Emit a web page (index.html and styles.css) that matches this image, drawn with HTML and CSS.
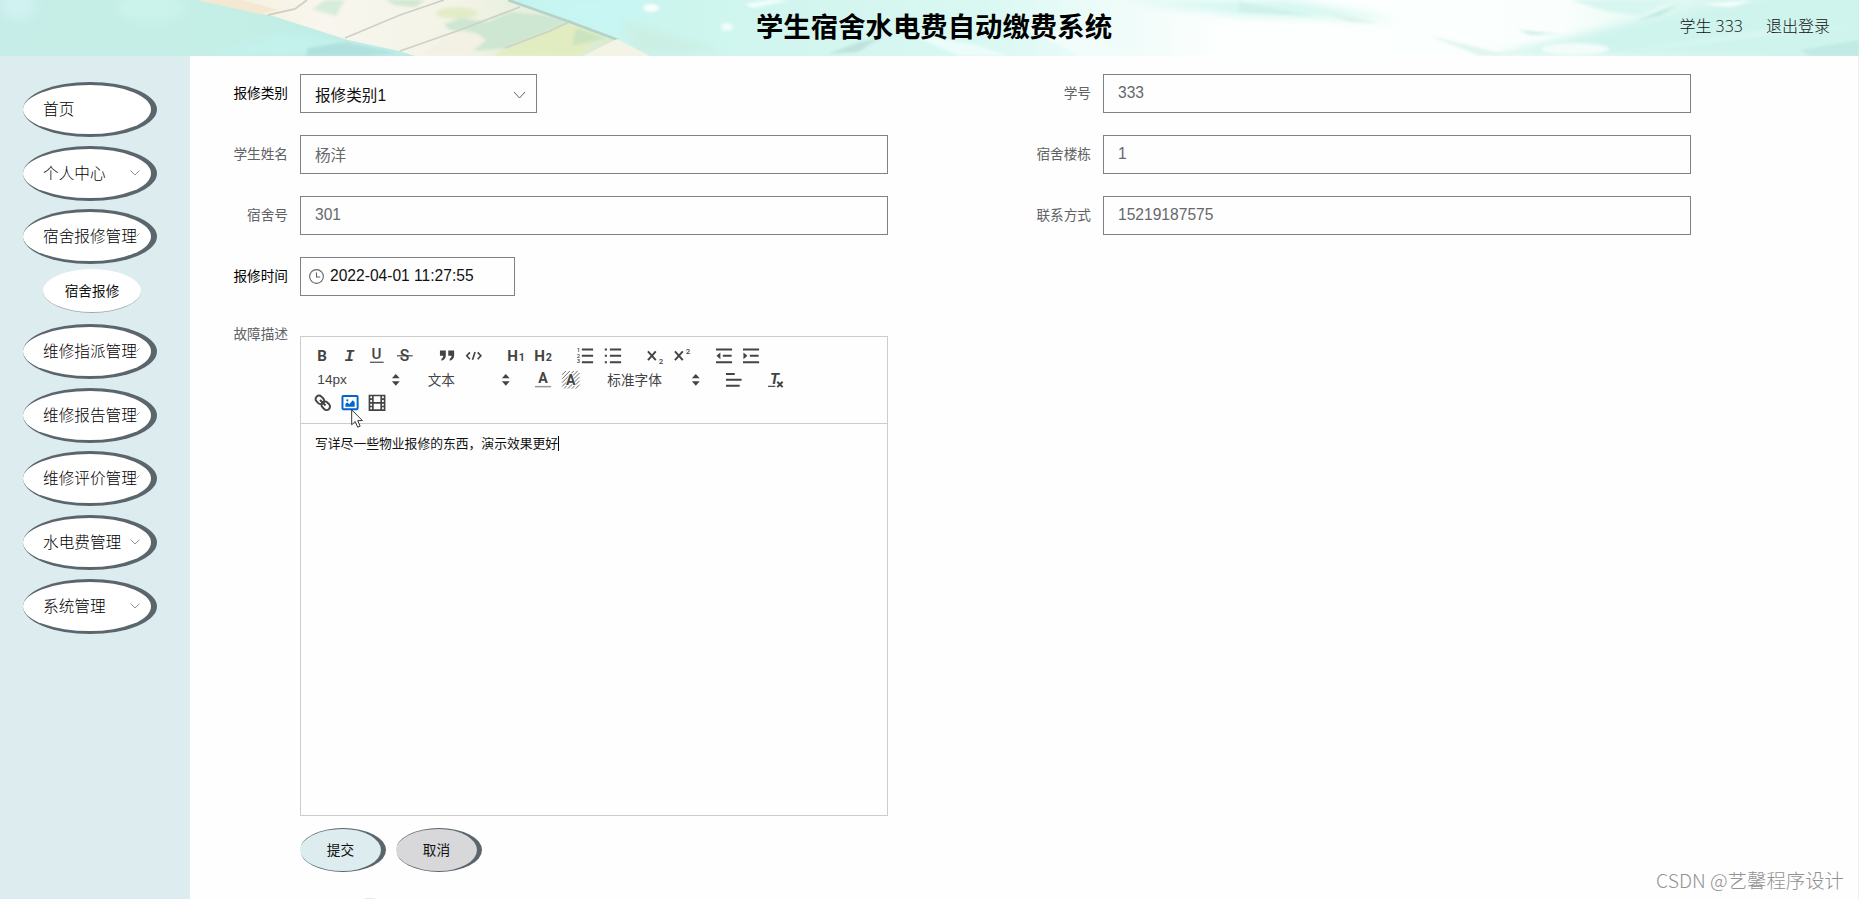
FILE: index.html
```html
<!DOCTYPE html>
<html lang="zh-CN">
<head>
    <meta charset="UTF-8">
    <meta name="viewport" content="width=device-width, initial-scale=1.0">
    <title>学生宿舍水电费自动缴费系统</title>
    <link rel="stylesheet" href="styles.css">
</head>
<body>
    <header class="header">
        <svg class="header-bg" viewBox="0 0 1859 56" preserveAspectRatio="none">
            <defs>
                <linearGradient id="sky">
                    <stop offset="0" stop-color="#c6ede7"/>
                    <stop offset=".12" stop-color="#c4efe6"/>
                    <stop offset=".22" stop-color="#bcebe5"/>
                    <stop offset=".33" stop-color="#c9f5ee"/>
                    <stop offset=".44" stop-color="#d3f6ef"/>
                    <stop offset=".53" stop-color="#daf8f3"/>
                    <stop offset=".6" stop-color="#effcf9"/>
                    <stop offset=".66" stop-color="#fdfffe"/>
                    <stop offset=".84" stop-color="#fafffd"/>
                    <stop offset=".92" stop-color="#d9f6ef"/>
                    <stop offset="1" stop-color="#c9f3ec"/>
                </linearGradient>
                <linearGradient id="roof">
                    <stop offset="0" stop-color="#f5eddb"/>
                    <stop offset=".3" stop-color="#f8f6ee"/>
                    <stop offset=".62" stop-color="#f3f3e7"/>
                    <stop offset="1" stop-color="#d8ebcf"/>
                </linearGradient>
                <filter id="soft"><feGaussianBlur stdDeviation="1.8"/></filter>
                <filter id="wash"><feGaussianBlur stdDeviation="5"/></filter>
            </defs>
            <rect width="1859" height="56" fill="url(#sky)"/>
            <g filter="url(#wash)">
                <ellipse cx="18" cy="6" rx="18" ry="14" fill="#d0f2f1"/>
                <ellipse cx="150" cy="8" rx="34" ry="14" fill="#ccf2ec"/>
                <path d="M210 56 280 34 360 44 410 56z" fill="#c3f2ec"/>
                <path d="M510 0H640V44L600 30z" fill="#c8f6f3"/>
                <path d="M620 20 720 50 640 56z" fill="#ccefe4"/>
                <path d="M1120 0H1290L1400 20 1240 16z" fill="#d5f7f1"/>
                <path d="M1490 56 1640 20 1740 0H1859V56z" fill="#cff4ed"/>
            </g>
            <path d="M198 0 273 16 348 40 399 51 415 56H583L617 39 575 24 510 0z" fill="url(#roof)"/>
            <path d="M198 0 259 14 279 10 242 0z" fill="#f5e8d2"/>
            <g filter="url(#soft)">
                <path d="M312 9 325 0H345L336 16z" fill="#d8ecdc"/>
                <path d="M385 0H425L415 7 395 5z" fill="#cfe8d0"/>
                <ellipse cx="457" cy="13" rx="21" ry="6" fill="#e3ecc8"/>
                <path d="M444 24 462 18 488 22 510 12 552 16 568 22 510 48 462 52 478 34 450 30z" fill="#cde7d2"/>
                <path d="M420 54 462 30 478 34 486 40 470 54z" fill="#f3f0e4"/>
                <path d="M510 47 568 22 600 34 580 56H492z" fill="#e1edc1"/>
                <path d="M576 28 606 38 572 46z" fill="#cbe4bf"/>
                <path d="M308 48 345 42 398 53 370 56H306z" fill="#b1e1de"/>
            </g>
            <g fill="none" stroke="#cdd2c5" stroke-width="1.8">
                <path d="M268 15 295 9 307 0"/>
                <path d="M345 38 400 15 444 0"/>
                <path d="M400 51 460 30 520 7"/>
                <path d="M505 48 550 31 571 21"/>
            </g>
            <path d="M508 0 570 22 618 40" fill="none" stroke="#b4d2cb" stroke-width="2.6"/>
            <path d="M583 56 617 39 650 56z" fill="#f3f4e6"/>
            <g filter="url(#soft)">
                <ellipse cx="651" cy="8" rx="8" ry="4" fill="#f8fffe"/>
                <ellipse cx="727" cy="27" rx="6" ry="4" fill="#f1fdfb"/>
                <path d="M745 4 770 0H790L752 8z" fill="#f4fffd"/>
                <path d="M828 54 860 42 880 38 858 52z" fill="#bfe2dd"/>
                <path d="M900 30 980 46 1010 56H960z" fill="#ecfcf9"/>
                <path d="M1010 20 1100 40 1140 56H1080z" fill="#f2fdfb"/>
                <path d="M1239 2 1315 16 1239 12z" fill="#cff1e9"/>
                <path d="M1320 11 1380 23 1350 22z" fill="#def3eb"/>
                <path d="M1430 36 1500 53 1560 48 1500 56H1480z" fill="#e1f5ed"/>
                <path d="M1518 30 1560 34 1530 35z" fill="#cdeee6"/>
                <path d="M1570 0H1670L1640 16 1610 12z" fill="#d8f6f0"/>
                <path d="M1636 21 1680 4 1660 15z" fill="#b6e5db"/>
                <path d="M1700 4 1755 0 1730 7z" fill="#f7fffe"/>
                <ellipse cx="1575" cy="49" rx="34" ry="6" fill="#f3fcf9"/>
                <path d="M1620 52 1760 30 1859 26 1700 44z" fill="#d7f7f1"/>
                <path d="M1800 50 1859 40V56H1810z" fill="#c0eae3"/>
            </g>
        </svg>
        <h1 class="header-title">学生宿舍水电费自动缴费系统</h1>
        <div class="header-user">
            <span>学生 333</span>
            <a class="logout">退出登录</a>
        </div>
    </header>

    <div class="wrapper">
        <nav class="sidebar">
            <ul class="menu">
                <li class="menu-item">首页</li>
                <li class="menu-item">个人中心<svg class="arrow" viewBox="0 0 10 6"><path d="M.5.5 5 5 9.5.5"/></svg></li>
                <li class="menu-item">宿舍报修管理<svg class="arrow" viewBox="0 0 10 6"><path d="M6.6 3.4 9.5.5"/></svg></li>
                <li class="submenu-item">宿舍报修</li>
                <li class="menu-item">维修指派管理<svg class="arrow" viewBox="0 0 10 6"><path d="M6.6 3.4 9.5.5"/></svg></li>
                <li class="menu-item">维修报告管理<svg class="arrow" viewBox="0 0 10 6"><path d="M6.6 3.4 9.5.5"/></svg></li>
                <li class="menu-item">维修评价管理<svg class="arrow" viewBox="0 0 10 6"><path d="M6.6 3.4 9.5.5"/></svg></li>
                <li class="menu-item">水电费管理<svg class="arrow" viewBox="0 0 10 6"><path d="M.5.5 5 5 9.5.5"/></svg></li>
                <li class="menu-item">系统管理<svg class="arrow" viewBox="0 0 10 6"><path d="M.5.5 5 5 9.5.5"/></svg></li>
            </ul>
        </nav>

        <main class="content">
            <div class="form-grid">
                <div class="form-item active">
                    <label>报修类别</label>
                    <div class="field select">报修类别1<svg class="select-arrow" viewBox="0 0 12 8"><path d="M.5 1 6 7 11.5 1"/></svg></div>
                </div>
                <div class="form-item">
                    <label>学号</label>
                    <div class="field">333</div>
                </div>
                <div class="form-item">
                    <label>学生姓名</label>
                    <div class="field">杨洋</div>
                </div>
                <div class="form-item">
                    <label>宿舍楼栋</label>
                    <div class="field">1</div>
                </div>
                <div class="form-item">
                    <label>宿舍号</label>
                    <div class="field">301</div>
                </div>
                <div class="form-item">
                    <label>联系方式</label>
                    <div class="field">15219187575</div>
                </div>
                <div class="form-item active">
                    <label>报修时间</label>
                    <div class="field date"><svg class="clock" viewBox="0 0 14 14"><circle cx="7" cy="7" r="6.4"/><path d="M7 3.2V7.4H10.4"/></svg>2022-04-01 11:27:55</div>
                </div>
            </div>

            <div class="form-item editor-item">
                <label>故障描述</label>
                <div class="editor">
                    <div class="toolbar">
                        <div class="toolbar-row">
                            <span class="formats">
                                <button><svg viewBox="0 0 18 18"><text class="glyph" x="3.4" y="14.6" font-size="15.5">B</text></svg></button>
                                <button><svg viewBox="0 0 18 18"><text class="glyph mono" x="3.6" y="14.4" font-size="17">I</text></svg></button>
                                <button><svg viewBox="0 0 18 18"><text class="glyph light" x="3.6" y="12.6" font-size="15.5">U</text><path class="thin" d="M2 15.6H16"/></svg></button>
                                <button><svg viewBox="0 0 18 18"><text class="glyph light" x="3.8" y="14.6" font-size="16">S</text><path class="thin" d="M1 9H17"/></svg></button>
                            </span>
                            <span class="formats">
                                <button><svg viewBox="0 0 18 18"><path class="fill" d="M2 3.500H8V8.500Q8 13 3.500 14V12Q5.300 11.500 5.400 9H2zM10.500 3.500H16.500V8.500Q16.500 13 12 14V12Q13.800 11.500 13.900 9H10.500z"/></svg></button>
                                <button><svg viewBox="0 0 18 18"><path class="even" d="M5 5.500 1.800 9 5 12.500M13 5.500 16.200 9 13 12.500M10.300 5 7.700 13"/></svg></button>
                            </span>
                            <span class="formats">
                                <button><svg viewBox="0 0 18 18"><text class="glyph" x=".2" y="14.4" font-size="15.5">H</text><text class="glyph" x="11.900" y="14.400" font-size="11">1</text></svg></button>
                                <button><svg viewBox="0 0 18 18"><text class="glyph" x=".2" y="14.4" font-size="15.5">H</text><text class="glyph" x="11.900" y="14.400" font-size="11">2</text></svg></button>
                            </span>
                            <span class="formats">
                                <button><svg viewBox="0 0 18 18"><path class="line" d="M6 2.500H17.500M6 9H17.500M6 15.500H17.500"/><text class="glyph light" x=".8" y="5.500" font-size="6">1</text><text class="glyph light" x=".8" y="11" font-size="6">2</text><text class="glyph light" x=".8" y="16.500" font-size="6">3</text></svg></button>
                                <button><svg viewBox="0 0 18 18"><path class="line" d="M6 2.500H17.500M6 9H17.500M6 15.500H17.500M.8 2.500H3M.8 9H3M.8 15.500H3"/></svg></button>
                            </span>
                            <span class="formats">
                                <button><svg viewBox="0 0 18 18"><path class="line" d="M2 4.500 10 13.500M10 4.500 2 13.500"/><text class="glyph light" x="13" y="17" font-size="8">2</text></svg></button>
                                <button><svg viewBox="0 0 18 18"><path class="line" d="M2 4.500 10 13.500M10 4.500 2 13.500"/><text class="glyph light" x="13" y="7" font-size="8">2</text></svg></button>
                            </span>
                            <span class="formats">
                                <button><svg viewBox="0 0 18 18"><path class="line" d="M1 2.500H17.500M8 9H17M1 15.500H17.500"/><path class="fill" d="M5.500 5.500V12.500L1.500 9z"/></svg></button>
                                <button><svg viewBox="0 0 18 18"><path class="line" d="M1 2.500H17.500M8 9H17M1 15.500H17.500"/><path class="fill" d="M1.500 5.500V12.500L5.500 9z"/></svg></button>
                            </span>
                        </div>
                        <div class="toolbar-row">
                            <span class="formats picker">14px<svg viewBox="0 0 18 18"><path class="fill" d="M5 7.500 9 3 13 7.500zM5 10.500 9 15 13 10.500z"/></svg></span>
                            <span class="formats picker">文本<svg viewBox="0 0 18 18"><path class="fill" d="M5 7.500 9 3 13 7.500zM5 10.500 9 15 13 10.500z"/></svg></span>
                            <span class="formats">
                                <button><svg viewBox="0 0 18 18"><text class="glyph" x="4.300" y="12" font-size="14.500">A</text><path class="pale" d="M1 16H17.500"/></svg></button>
                                <button><svg viewBox="0 0 18 18"><path class="hatch" d="M0 4 4 0M0 8 8 0M0 12 12 0M0 16 16 0M2 18 18 2M6 18 18 6M10 18 18 10M14 18 18 14"/><text class="glyph halo" x="4" y="14" font-size="14.500">A</text></svg></button>
                            </span>
                            <span class="formats picker font">标准字体<svg viewBox="0 0 18 18"><path class="fill" d="M5 7.500 9 3 13 7.500zM5 10.500 9 15 13 10.500z"/></svg></span>
                            <span class="formats">
                                <button><svg viewBox="0 0 18 18"><path class="line" d="M2 3H11M2 9H18M2 15H16"/></svg></button>
                            </span>
                            <span class="formats">
                                <button><svg viewBox="0 0 18 18"><text class="glyph slant" x="4" y="13" font-size="15.500">T</text><path class="thin" d="M2 15.700H9.500"/><path class="line" d="M11.500 11 17 16.500M17 11 11.500 16.500"/></svg></button>
                            </span>
                        </div>
                        <div class="toolbar-row">
                            <span class="formats">
                                <button><svg viewBox="0 0 18 18"><g class="chain" transform="rotate(45 9 9)"><rect x="0" y="5.500" width="9.500" height="7" rx="3.500"/><rect x="8.500" y="5.500" width="9.500" height="7" rx="3.500"/><path d="M5 9H13"/></g></svg></button>
                                <button class="hover"><svg viewBox="0 0 18 18"><rect class="line" x="1.500" y="2" width="15.500" height="13.500" rx=".8"/><circle class="fill" cx="6.500" cy="6.500" r="1.100"/><path class="fill" d="M4.500 13V10L6.500 8.800 8.500 10.500 12 6.500 14 8.500V13z"/></svg></button>
                                <button><svg viewBox="0 0 18 18"><path class="even" d="M1.500 1.500H17V16.500H1.500zM5 1.500V16.500M13.500 1.500V16.500M5 9H13.500M1.500 5.200H5M1.500 9H5M1.500 12.800H5M13.500 5.200H17M13.500 9H17M13.500 12.800H17"/></svg></button>
                            </span>
                        </div>
                    </div>
                    <div class="editor-body">写详尽一些物业报修的东西，演示效果更好<span class="caret"></span></div>
                </div>
            </div>

            <div class="buttons">
                <button class="btn submit">提交</button>
                <button class="btn cancel">取消</button>
            </div>
        </main>
    </div>

    <svg class="cursor" viewBox="0 0 12 19"><path d="M.7.800V15.800L4.200 12.500 6.700 18.200 9.200 17.100 6.700 11.600H11.400z"/></svg>
    <div class="loading-dot"></div>
    <div class="watermark">CSDN @艺馨程序设计</div>
</body>
</html>
```
FILE: styles.css
```css
* {
    box-sizing: border-box;
}
body {
    margin: 0;
    height: 899px;
    overflow: hidden;
    background: #fefefe;
    color: #111;
    font-family: "Liberation Sans", "Noto Sans CJK SC", sans-serif;
    font-size: 13.67px;
}

/* header */
.header {
    position: relative;
    display: flex;
    align-items: center;
    justify-content: center;
    height: 56px;
}
.header-bg {
    position: absolute;
    inset: 0;
    width: 100%;
    height: 100%;
}
.header-title {
    position: relative;
    margin: 0 0 0 9px;
    color: #000;
    font-size: 27.4px;
    line-height: 58px;
    font-weight: bold;
}
.header-user {
    position: absolute;
    top: 0;
    right: 29px;
    display: flex;
    gap: 23px;
    color: #111;
    font-family: "Open Sans", "Noto Sans CJK SC", sans-serif;
    font-size: 16px;
    font-weight: 300;
    line-height: 53px;
}

.wrapper {
    display: flex;
    height: 843px;
}

/* sidebar */
.sidebar {
    width: 190px;
    padding: 26px 0 0 23px;
    background: #dcecef;
}
.menu {
    margin: 0;
    padding: 0;
    list-style: none;
}
.menu-item {
    display: flex;
    align-items: center;
    position: relative;
    width: 134px;
    height: 55px;
    margin-bottom: 8.7px;
    padding: 0 0 2px 20px;
    border: solid #5a666b;
    border-width: 3px 6px 3px 0;
    border-radius: 50%;
    background: #fff;
    color: #000;
    font-size: 15.65px;
    font-weight: 300;
    white-space: nowrap;
}
.menu-item .arrow {
    position: absolute;
    top: 21px;
    left: 107px;
    width: 10px;
    height: 6px;
    fill: none;
    stroke: #909399;
}
.submenu-item {
    display: flex;
    align-items: center;
    justify-content: center;
    width: 98px;
    height: 44px;
    margin: -4px 0 11px 20px;
    padding-bottom: 2px;
    border-bottom: 1px solid #9da6a9;
    border-radius: 50%;
    background: #fff;
    font-size: 13.67px;
}

/* form */
.content {
    flex: 1;
    padding-top: 18px;
    border-right: 1px solid #eee;
}
.form-grid {
    display: grid;
    grid-template-columns: 803px 698px;
    row-gap: 22px;
}
.form-item {
    display: flex;
    align-items: center;
    color: #606266;
}
.form-item.active {
    color: #000;
}
.form-item label {
    width: 98px;
    margin-right: 12px;
    padding-bottom: 3px;
    text-align: right;
}
.field {
    display: flex;
    align-items: center;
    width: 588px;
    height: 39px;
    padding: 0 14px 1px;
    border: 1px solid #808183;
    color: #66686c;
    font-size: 15.6px;
}
.active .field {
    color: #111;
}
.select {
    justify-content: space-between;
    width: 237px;
    padding: 0 10px 0 14px;
}
.select-arrow {
    width: 13px;
    height: 8px;
    margin-top: 2px;
    fill: none;
    stroke: #606266;
}
.date {
    width: 215px;
    padding-left: 8px;
}
.clock {
    width: 15px;
    height: 15px;
    margin-right: 6px;
    fill: none;
    stroke: #606266;
}

/* rich text editor */
.editor-item {
    align-items: flex-start;
    margin-top: 30px;
}
.editor-item label {
    padding: 0;
    line-height: 18px;
}
.editor {
    width: 588px;
    height: 480px;
    margin-top: 10px;
    border: 1px solid #ccc;
}
.toolbar {
    height: 87px;
    padding: 7.3px 7.8px;
    border-bottom: 1px solid #ccc;
}
.toolbar-row {
    display: flex;
    gap: 14.65px;
    height: 23.45px;
}
.formats {
    display: flex;
    height: 23.45px;
}
.formats button {
    width: 27.35px;
    height: 23.45px;
    padding: 3px 4.9px;
    border: 0;
    background: none;
}
.formats svg {
    display: block;
    width: 17.6px;
    height: 17.6px;
    overflow: visible;
    color: #444;
    fill: none;
    stroke: none;
}
.formats .hover svg {
    color: #06c;
}
.picker {
    align-items: center;
    justify-content: space-between;
    width: 95.7px;
    padding-left: 8.5px;
    color: #444;
}
.picker.font {
    width: 105.5px;
}
.line, .even, .thin, .pale, .hatch, .chain {
    fill: none;
    stroke: currentColor;
}
.line, .chain {
    stroke-width: 2;
}
.even {
    stroke-width: 1.7;
}
.thin {
    stroke-width: 1.2;
}
.pale {
    stroke: #999;
    stroke-width: 1.5;
}
.hatch {
    stroke-width: .8;
}
.fill {
    fill: currentColor;
}
.glyph {
    fill: currentColor;
    font-family: Roboto, sans-serif;
    font-weight: 700;
}
.glyph.light {
    font-weight: 500;
}
.glyph.mono {
    font-family: "Liberation Mono", monospace;
    font-style: italic;
}
.glyph.slant {
    font-style: italic;
}
.glyph.halo {
    stroke: #fff;
    stroke-width: 1.4;
    paint-order: stroke;
}
.editor-body {
    display: flex;
    align-items: center;
    height: 37px;
    padding-left: 14px;
    color: #111;
    font-size: 12.8px;
}
.caret {
    width: 1px;
    height: 15px;
    margin-top: 2px;
    background: #000;
}

/* buttons */
.buttons {
    display: flex;
    gap: 10px;
    margin: 12px 0 0 110px;
}
.btn {
    width: 86px;
    height: 44px;
    padding: 0 0 3px;
    border: solid #5a666b;
    border-width: 1px 5px 1px 0;
    border-radius: 50%;
    color: #111;
    font-family: inherit;
    font-size: 13.67px;
}
.submit {
    background: #dcecef;
}
.cancel {
    background: #d8d8db;
}

.cursor {
    position: absolute;
    top: 409px;
    left: 351px;
    width: 12px;
    height: 19px;
    fill: #fff;
    stroke: #333;
}
.loading-dot {
    position: absolute;
    top: 898px;
    left: 365px;
    width: 10px;
    height: 1px;
    background: #d3ecfb;
}
.watermark {
    position: absolute;
    right: 15px;
    bottom: 5px;
    color: #929292;
    font-family: "Noto Sans CJK SC", sans-serif;
    font-size: 19.4px;
    font-weight: 300;
    line-height: 28px;
}
```
